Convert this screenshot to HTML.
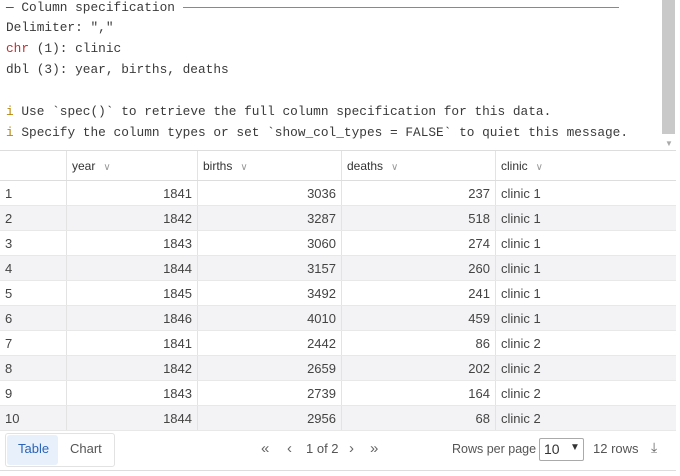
<!DOCTYPE html>
<html><head><style>
body{margin:0;width:680px;height:476px;background:#fff;position:relative;overflow:hidden;font-family:"Liberation Sans",sans-serif;}
.con{position:absolute;left:6px;top:0;font-family:"Liberation Mono",monospace;font-size:12.8px;color:#3a3a3a;}
.con div{position:absolute;white-space:pre;left:0;}
.sb{position:absolute;left:662px;top:0;width:13px;height:134px;background:#c9c9c9;}
table{position:absolute;left:0;top:150px;width:676px;border-collapse:collapse;font-size:13px;color:#444;}
th{height:29px;text-align:left;font-weight:normal;font-size:12px;color:#333;padding:0 5px;border-left:1px solid #e3e3e3;border-top:1px solid #ddd;border-bottom:1px solid #ddd;}
td{height:24px;padding:0 5px;border-left:1px solid #e3e3e3;border-bottom:1px solid #e8e8e8;}
th:first-child,td:first-child{border-left:none;}
tr:nth-child(odd) td{background:#f3f3f5;}
.r{text-align:right;}
.car{color:#999;font-size:10px;margin-left:8px;}
.foot{position:absolute;top:430px;left:0;width:676px;height:40px;border-bottom:1px solid #ddd;font-size:13px;color:#555;}
</style></head><body>
<div class="con">
<div style="top:0px">— Column specification <span style="display:inline-block;width:436px;border-top:1px solid #c8783a;vertical-align:middle"></span></div>
<div style="top:20px">Delimiter: ","</div>
<div style="top:41px"><span style="color:#b33">chr</span> (1): clinic</div>
<div style="top:62px">dbl (3): year, births, deaths</div>
<div style="top:104px"><span style="color:#b8860b">i</span> Use `spec()` to retrieve the full column specification for this data.</div>
<div style="top:125px"><span style="color:#b8860b">i</span> Specify the column types or set `show_col_types = FALSE` to quiet this message.</div>
</div>
<div class="sb"></div>
<div style="position:absolute;left:665px;top:139px;color:#aaa;font-size:8px">▼</div>
<table>
<tr><th style="width:56px"></th><th style="width:120px">year<span class="car">∨</span></th><th style="width:133px">births<span class="car">∨</span></th><th style="width:143px">deaths<span class="car">∨</span></th><th>clinic<span class="car">∨</span></th></tr>
<tr><td>1</td><td class="r">1841</td><td class="r">3036</td><td class="r">237</td><td>clinic 1</td></tr>
<tr><td>2</td><td class="r">1842</td><td class="r">3287</td><td class="r">518</td><td>clinic 1</td></tr>
<tr><td>3</td><td class="r">1843</td><td class="r">3060</td><td class="r">274</td><td>clinic 1</td></tr>
<tr><td>4</td><td class="r">1844</td><td class="r">3157</td><td class="r">260</td><td>clinic 1</td></tr>
<tr><td>5</td><td class="r">1845</td><td class="r">3492</td><td class="r">241</td><td>clinic 1</td></tr>
<tr><td>6</td><td class="r">1846</td><td class="r">4010</td><td class="r">459</td><td>clinic 1</td></tr>
<tr><td>7</td><td class="r">1841</td><td class="r">2442</td><td class="r">86</td><td>clinic 2</td></tr>
<tr><td>8</td><td class="r">1842</td><td class="r">2659</td><td class="r">202</td><td>clinic 2</td></tr>
<tr><td>9</td><td class="r">1843</td><td class="r">2739</td><td class="r">164</td><td>clinic 2</td></tr>
<tr><td>10</td><td class="r">1844</td><td class="r">2956</td><td class="r">68</td><td>clinic 2</td></tr>
</table>
<div class="foot">
<div style="position:absolute;left:5px;top:3px;width:108px;height:32px;border:1px solid #e2e2e2;border-radius:3px"></div>
<div style="position:absolute;left:7px;top:5px;width:51px;height:30px;background:#e8f0fb;border-radius:3px"></div>
<div style="position:absolute;left:18px;top:11px;color:#2a63b8">Table</div>
<div style="position:absolute;left:70px;top:11px">Chart</div>
<div style="position:absolute;left:261px;top:10px;color:#666;font-size:15px">«</div>
<div style="position:absolute;left:287px;top:10px;color:#666;font-size:15px">‹</div>
<div style="position:absolute;left:306px;top:11px;color:#555">1 of 2</div>
<div style="position:absolute;left:349px;top:10px;color:#666;font-size:15px">›</div>
<div style="position:absolute;left:370px;top:10px;color:#666;font-size:15px">»</div>
<div style="position:absolute;left:452px;top:12px;font-size:12.5px">Rows per page</div>
<div style="position:absolute;left:539px;top:8px;width:43px;height:21px;border:1px solid #aaa;border-radius:2px;font-size:14px;color:#333"><span style="position:absolute;left:4px;top:2px">10</span><span style="position:absolute;left:30px;top:3px;font-size:10px">▼</span></div>
<div style="position:absolute;left:593px;top:11px">12 rows</div>
<div style="position:absolute;left:651px;top:9px;color:#666;font-size:14px">⤓</div>
</div>
</body></html>
